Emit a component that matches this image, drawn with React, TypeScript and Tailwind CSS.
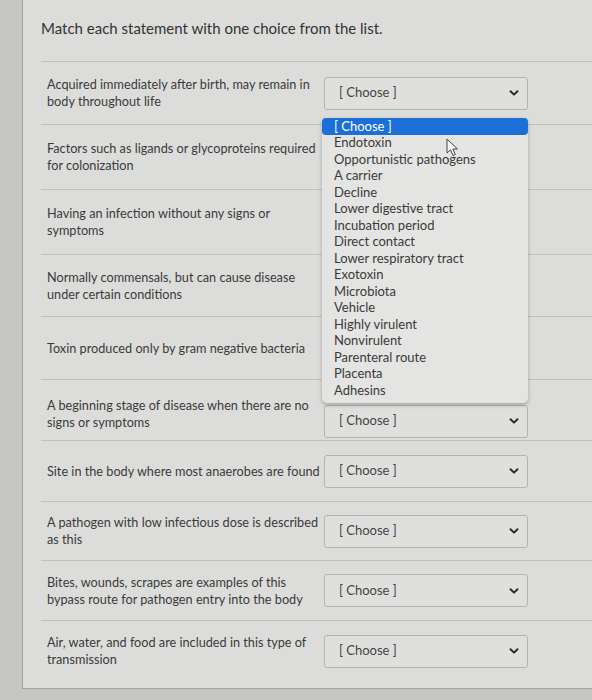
import React from "react";

const rows: { lines: string[]; h: string; shift?: boolean; covered?: boolean }[] = [
  { lines: ["Acquired immediately after birth, may remain in", "body throughout life"], h: "h-[63px]" },
  { lines: ["Factors such as ligands or glycoproteins required", "for colonization"], h: "h-[65px]", covered: true },
  { lines: ["Having an infection without any signs or", "symptoms"], h: "h-[65px]", covered: true },
  { lines: ["Normally commensals, but can cause disease", "under certain conditions"], h: "h-[62px]", covered: true },
  { lines: ["Toxin produced only by gram negative bacteria"], h: "h-[63px]", covered: true },
  { lines: ["A beginning stage of disease when there are no", "signs or symptoms"], h: "h-[61px]", shift: true },
  { lines: ["Site in the body where most anaerobes are found"], h: "h-[61px]" },
  { lines: ["A pathogen with low infectious dose is described", "as this"], h: "h-[59px]" },
  { lines: ["Bites, wounds, scrapes are examples of this", "bypass route for pathogen entry into the body"], h: "h-[60px]" },
  { lines: ["Air, water, and food are included in this type of", "transmission"], h: "h-[60px]" },
];

const options = [
  "Endotoxin",
  "Opportunistic pathogens",
  "A carrier",
  "Decline",
  "Lower digestive tract",
  "Incubation period",
  "Direct contact",
  "Lower respiratory tract",
  "Exotoxin",
  "Microbiota",
  "Vehicle",
  "Highly virulent",
  "Nonvirulent",
  "Parenteral route",
  "Placenta",
  "Adhesins",
];

function Chevron() {
  return (
    <svg width="10" height="8" viewBox="0 0 10 8" className="absolute right-[8px] top-1/2 -translate-y-1/2">
      <path d="M1.5 2.2 L5 5.6 L8.5 2.2" fill="none" stroke="#2b2b2b" strokeWidth="2" strokeLinecap="round" strokeLinejoin="round" />
    </svg>
  );
}

function Select({ shift, covered }: { shift?: boolean; covered?: boolean }) {
  return (
    <div
      className={`relative h-[33px] w-[204px] shrink-0 rounded-[3px] border border-[#b3b4b2] bg-[#dfe0de] pl-[14px] flex items-center text-[13px] text-[#444] ${shift ? "translate-y-[11px]" : ""} ${covered ? "invisible" : ""}`}
    >
      [ Choose ]
      <Chevron />
    </div>
  );
}

export default function App() {
  return (
    <div
      className="relative flex h-[700px] w-[592px] overflow-hidden bg-[#c6c7c5]"
      style={{ fontFamily: "Lato, 'Open Sans', sans-serif" }}
    >
      <div className="ml-[22px] flex h-[689px] flex-1 flex-col border-b border-l border-[#a3a4a2] bg-[#dcdddb]">
        <div className="pl-[18px] pt-[18px] text-[15px] leading-[20px] text-[#333]">
          Match each statement with one choice from the list.
        </div>
        <div className="ml-[18px] mt-[23px] flex flex-col border-t border-[#bfc0be]">
          {rows.map((r, i) => (
            <div
              key={i}
              className={`flex ${r.h} items-center pl-[6px] ${i < rows.length - 1 ? "border-b border-[#c0c1bf]" : ""}`}
            >
              <div
                className={`w-[277px] shrink-0 whitespace-nowrap text-[12.7px] leading-[17px] text-[#3a3a3a] ${r.shift ? "translate-y-[4px]" : ""}`}
              >
                {r.lines.map((l, j) => (
                  <div key={j}>{l}</div>
                ))}
              </div>
              <Select shift={r.shift} covered={r.covered} />
            </div>
          ))}
        </div>
      </div>

      {/* open dropdown */}
      <div className="absolute left-[322px] top-[118px] w-[206px] rounded-b-[5px] rounded-t-[4px] bg-[#e4e5e3] pb-[4px] shadow-[0_2px_4px_rgba(0,0,0,0.25)] text-[13px] text-[#3a3a3a]">
        <div className="flex h-[16.5px] items-center rounded-[4px] bg-[#1b6fd6] pl-[12px] text-white">[ Choose ]</div>
        {options.map((o) => (
          <div key={o} className="flex h-[16.5px] items-center pl-[12px]">
            {o}
          </div>
        ))}
      </div>

      {/* mouse cursor */}
      <svg width="14" height="20" viewBox="0 0 14 20" className="absolute left-[446px] top-[138px]">
        <path d="M1 1 L1 15 L4.5 11.8 L7 17.5 L9.3 16.5 L6.9 11 L11.5 11 Z" fill="#f4f4f4" stroke="#444" strokeWidth="1" strokeLinejoin="round" />
      </svg>
    </div>
  );
}
